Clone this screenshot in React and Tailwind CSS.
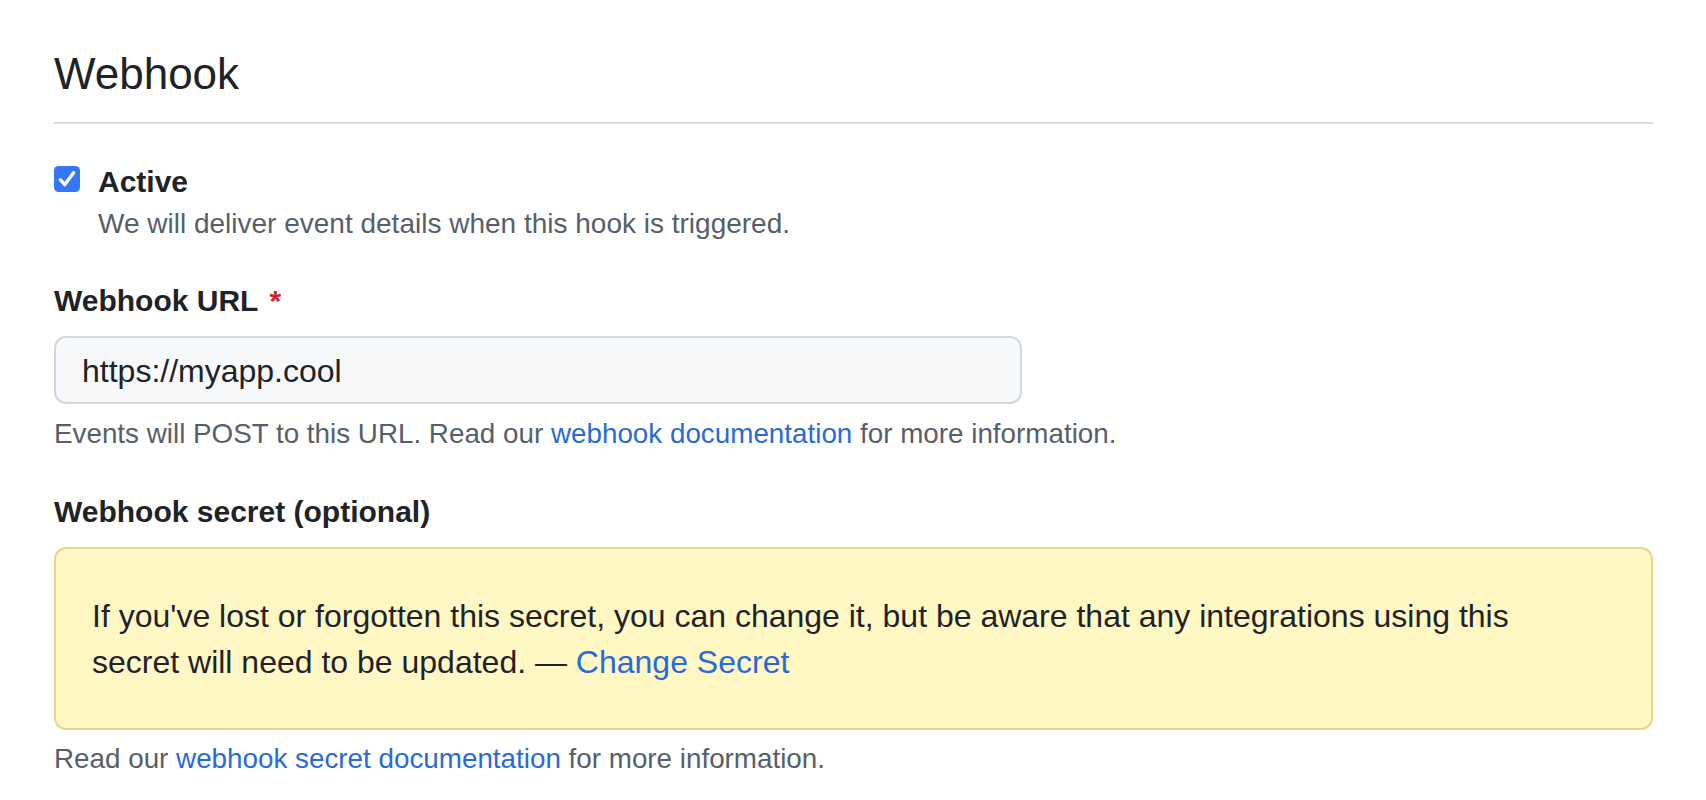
export default function App() {
  return (
    <div className="min-h-[800px] w-[1706px] bg-white font-['Liberation_Sans',Arial,sans-serif] text-[#1f2328]">
      <div className="ml-[54px] w-[1599px] pt-[44px]">
        <div className="border-b-2 border-[#d8dee4] pb-[18px]">
          <h2 className="text-[44px] leading-[60px] font-normal">Webhook</h2>
        </div>

        <div className="mt-[40px] flex items-start">
          <div className="mt-[2px] h-[26px] w-[26px] shrink-0">
            <svg width="26" height="26" viewBox="0 0 26 26">
              <rect x="0" y="0" width="26" height="26" rx="4.5" fill="#3478f6" />
              <path d="M6.5 13.8 L10.8 18.6 L19.6 6.8" fill="none" stroke="#ffffff" strokeWidth="3.4" strokeLinecap="round" strokeLinejoin="round" />
            </svg>
          </div>
          <div className="ml-[18px]">
            <div className="text-[30px] leading-[36px] font-bold">Active</div>
            <p className="mt-[4px] text-[28px] leading-[40px] text-[#57606a]">
              We will deliver event details when this hook is triggered.
            </p>
          </div>
        </div>

        <div className="mt-[39px] text-[30px] leading-[36px] font-bold">
          Webhook URL<span className="ml-[11px] text-[#cf222e]">*</span>
        </div>
        <div className="mt-[17px] h-[68px] w-[968px] rounded-[12px] border-2 border-[#d0d7de] bg-[#f6f8fa] pl-[26px] pt-[1px] text-[32px] leading-[64px] text-[#1f2328]">
          https://myapp.cool
        </div>
        <p className="mt-[10px] text-[27.8px] leading-[40px] text-[#57606a]">
          Events will POST to this URL. Read our{" "}
          <a className="text-[#2a6ad8]">webhook documentation</a> for more information.
        </p>

        <div className="mt-[40px] text-[30px] leading-[36px] font-bold">Webhook secret (optional)</div>
        <div className="mt-[17px] rounded-[12px] border-2 border-[#e8d58c] bg-[#fff8c5] px-[36px] pt-[44px] pb-[43px] text-[32px] leading-[46px]">
          If you've lost or forgotten this secret, you can change it, but be aware that any integrations using this
          <br />
          secret will need to be updated. — <a className="text-[#2a6ad8]">Change Secret</a>
        </div>
        <p className="mt-[9px] text-[27.8px] leading-[40px] text-[#57606a]">
          Read our <a className="text-[#2a6ad8]">webhook secret documentation</a> for more information.
        </p>
      </div>
    </div>
  );
}
